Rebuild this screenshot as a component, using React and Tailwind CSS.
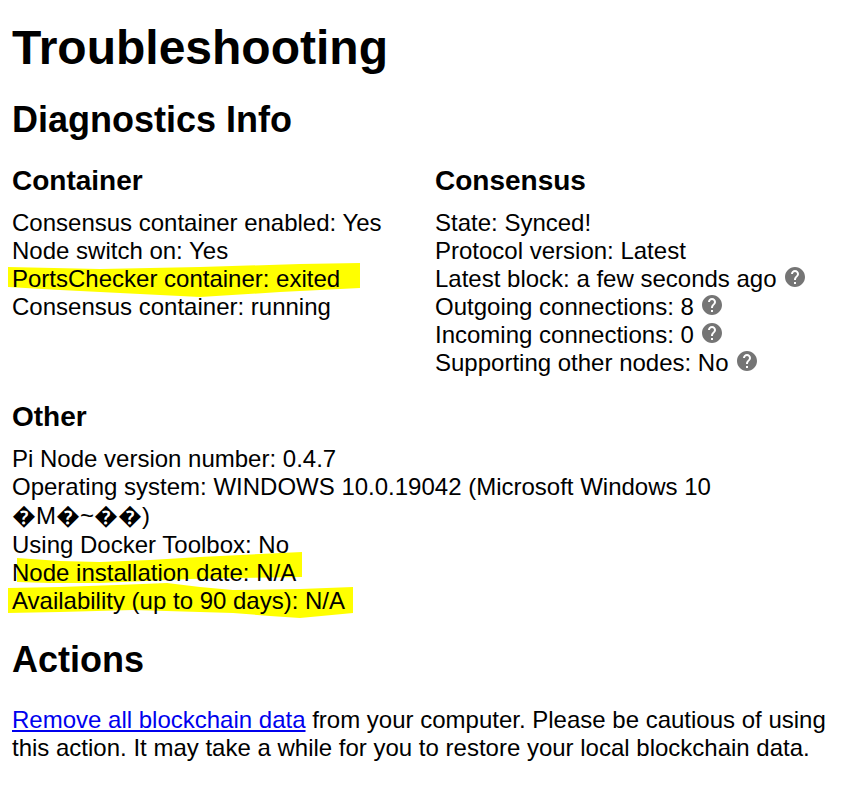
import React from "react";
import { MdHelp } from "react-icons/md";

const Help = () => (
  <MdHelp className="inline-block ml-1.5 mb-[7px] text-[24px] text-[#757575]" />
);

const App = () => {
  return (
    <div className="relative min-h-[787px] bg-white text-black px-3 pt-5 font-['Liberation_Sans',Arial,sans-serif] text-[24px] leading-[28px]">
      {/* marker strokes drawn over the screenshot */}
      <svg className="absolute left-0 top-0" width="852" height="787" fill="#ffff00">
        <path d="M8 267 L100 269 L200 267 L300 264 L360 263 L360 288 L280 292 L200 297 L120 293 L60 290 L8 287 Z" />
        <path d="M17 558 L60 561 L100 562 L150 560 L200 557 L302 552 L302 577 L233 578 L190 579 L100 583 L50 583 L17 582 Z" />
        <path d="M8 588 L60 587 L117 585 L167 583 L200 587 L233 590 L300 589 L353 587 L353 613 L300 618 L270 616 L233 613 L133 610 L60 612 L8 613 Z" />
      </svg>

      <div className="relative">
        <h1 className="text-[48px] leading-[55px] font-bold">Troubleshooting</h1>
        <h2 className="mt-[24px] text-[36px] leading-[41px] font-bold">Diagnostics Info</h2>

        <div className="flex mt-[25px]">
          <div className="w-[423px]">
            <h3 className="text-[28px] leading-[32px] font-bold mb-3">Container</h3>
            <div>Consensus container enabled: Yes</div>
            <div>Node switch on: Yes</div>
            <div>PortsChecker container: exited</div>
            <div>Consensus container: running</div>
          </div>
          <div>
            <h3 className="text-[28px] leading-[32px] font-bold mb-3">Consensus</h3>
            <div className="h-7">State: Synced!</div>
            <div className="h-7">Protocol version: Latest</div>
            <div className="h-7">Latest block: a few seconds ago<Help /></div>
            <div className="h-7">Outgoing connections: 8<Help /></div>
            <div className="h-7">Incoming connections: 0<Help /></div>
            <div className="h-7">Supporting other nodes: No<Help /></div>
          </div>
        </div>

        <h3 className="mt-6 text-[28px] leading-[32px] font-bold mb-3">Other</h3>
        <div>Pi Node version number: 0.4.7</div>
        <div>Operating system: WINDOWS 10.0.19042 (Microsoft Windows 10 <span className="leading-[30px]">{"\uFFFDM\uFFFD~\uFFFD\uFFFD)"}</span></div>
        <div>Using Docker Toolbox: No</div>
        <div>Node installation date: N/A</div>
        <div>Availability (up to 90 days): N/A</div>

        <h2 className="mt-[24px] text-[36px] leading-[41px] font-bold">Actions</h2>
        <p className="mt-[26px]">
          <a href="#" className="text-[#0000ee] underline">Remove all blockchain data</a> from your computer. Please be cautious of using this action. It may take a while for you to restore your local blockchain data.
        </p>
      </div>
    </div>
  );
};

export default App;
